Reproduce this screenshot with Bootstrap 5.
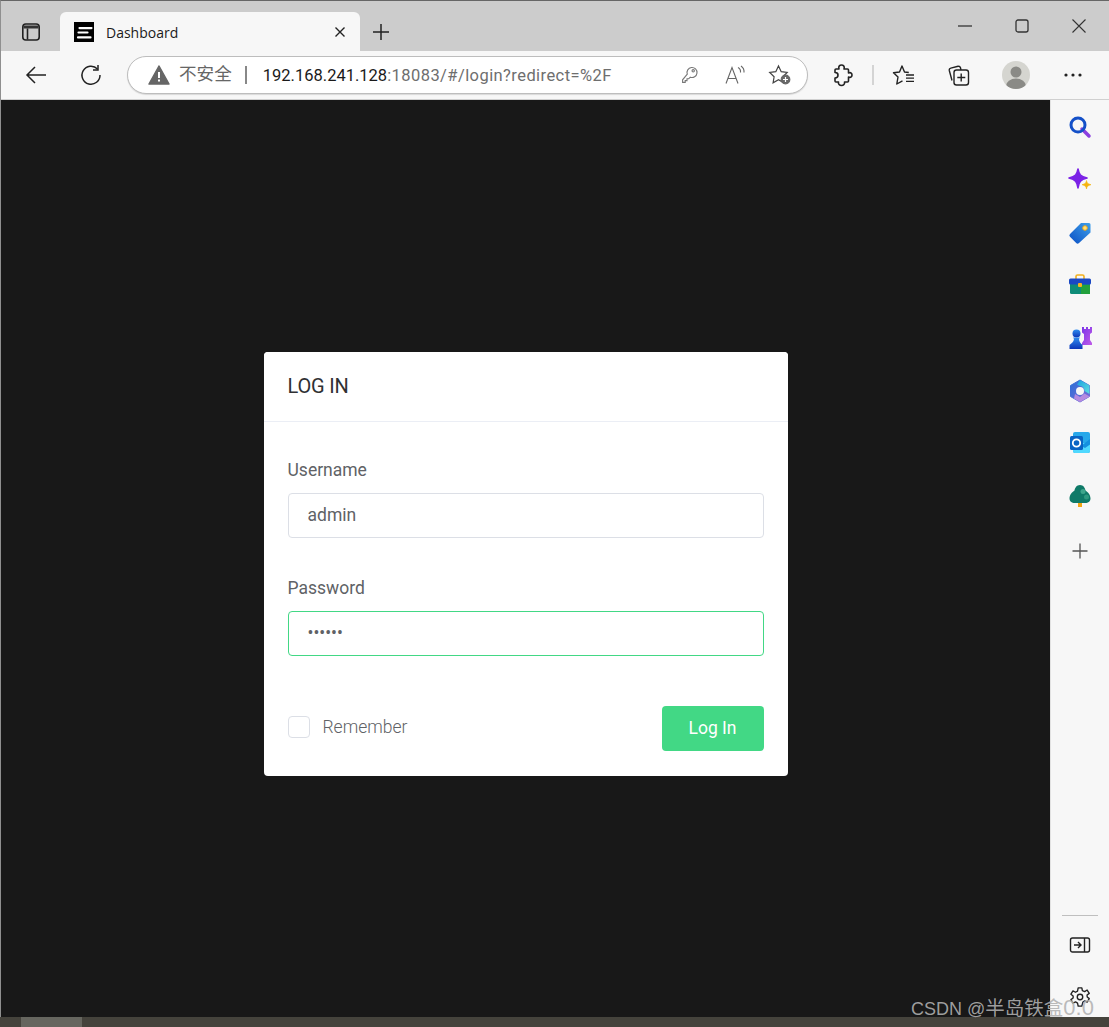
<!DOCTYPE html>
<html lang="en">
<head>
<meta charset="utf-8">
<title>Dashboard</title>
<link rel="stylesheet" href="https://cdn.jsdelivr.net/npm/bootstrap@5.3.0/dist/css/bootstrap.min.css">
<style>
html,body{height:100%;margin:0;overflow:hidden;background:#181818}
body{font-family:Roboto,"Noto Sans CJK SC",sans-serif}
.win{width:1109px;height:1027px;position:relative;background:#f7f7f7;border-left:1px solid #8f8f8f;border-top:1px solid #666}
.strip{height:50px;background:#ccc;padding-top:11px;padding-left:8px}
.tabs-btn{width:44px;height:40px}
.tab{width:300px;height:40px;margin-left:7px;background:#f7f7f7;border-radius:6px 6px 0 0;padding:0 14px 0 14px;font:14px "Open Sans",Roboto,sans-serif;color:#1b1b1b}
.favi{width:20px;height:20px;background:#000;margin-right:12px;flex:none}
.newtab{width:44px;height:40px;margin-left:-1px}
.winctl{margin-left:auto;margin-top:-11px;height:50px;padding-right:2px}
.winctl span{width:57px;height:50px}
.tools{height:48px;background:#f7f7f7;padding-left:13px}
.tool{width:44px;height:40px;flex:none}
.m-refresh{margin-left:11px}
.m-fav{margin-left:8px}
.m-coll{margin-left:11px}
.m-user{margin-left:13px}
.addr{width:681px;height:38px;margin-left:14px;margin-right:12px;background:#fff;border:1px solid #bdbdbd;border-radius:19px;padding-left:20px;font:16.5px Roboto,"Noto Sans CJK SC",sans-serif;color:#6e6e6e;box-shadow:0 1px 1px rgba(0,0,0,.12);flex:none}
.insec{margin-left:9px;color:#666;font-size:17.6px;line-height:20px;padding-bottom:3px}
.vbar{width:2px;height:18px;background:#888;margin:0 16px 0 13px}
.host{color:#1a1a1a}
.rest{letter-spacing:.43px}
.addr-ico{margin-left:auto;padding-right:5px}
.addr-ico span{width:45px}
.sep{width:2px;height:20px;background:#d4d4d4;margin:0 0 0 8px}
.body-row{height:918px;border-top:1px solid #d0d0d0}
.stage{width:1049px;background:#181818;padding-top:11px}
.side{width:59px;background:#f7f7f7;border-left:1px solid #e2e2e2;padding-top:1px}
.side-ico{height:52.7px;width:58px;flex:none}
.side-ico.plus-i{height:57px}
.side-ico.dock-i{height:58px}
.side-ico.gear-i{height:43px;padding-top:3px}
.side-rule{width:36px;height:1px;background:#bfbfbf;margin:0 auto;flex:none}
.spacer{flex:1}
.login{width:524px;height:424px;border:0;border-radius:4px;background:#fff}
.login .card-header{height:70px;background:#fff;border-bottom:1px solid #ebeef5;padding:0 24px;font-size:20px;letter-spacing:-.2px;line-height:68px;color:#303133;border-radius:4px 4px 0 0}
.login .card-body{padding:36px 24px 25px}
.lbl{font-size:17.5px;line-height:24px;color:#606266;margin:0 0 11px;display:block}
.fld{height:45px;border:1px solid #dcdfe6;border-radius:4px;padding:0 19px 2px;font-size:17.500px;color:#606266;box-shadow:none}
.fld.on,.fld.on:focus{border-color:#42d885;box-shadow:none;color:#606266}
.gap-f{margin-bottom:38px}
.foot{margin-top:50px}
.rem-wrap{margin-bottom:3px}
.chk{width:22px;height:22px;margin:0;border:1px solid #dcdfe6;border-radius:4px;flex:none}
.rem{font-size:17.5px;font-weight:300;color:#606266;margin:0 0 0 13px}
.btn-in{width:102px;height:45px;padding:0;background:#42d885;border:0;border-radius:4px;color:#fff;font-size:17.5px}
.btn-in:hover{background:#42d885;color:#fff}
.bottom{height:10px;background:#45433c;margin-left:-1px}
.thumb{width:61px;height:10px;margin-left:21px;background:#66665f}
.mark-w{position:absolute;left:910px;top:996px;font:18px "Liberation Sans","Noto Sans CJK SC",sans-serif;color:rgba(178,178,178,.88);line-height:22px;white-space:nowrap}
.mark-c{font-size:19.5px}
.mark-n{font-size:22px}
</style>
</head>
<body>
<div class="win d-flex flex-column">
  <div class="strip d-flex align-items-start">
    <div class="tabs-btn d-flex align-items-center justify-content-center">
      <svg width="20" height="20" viewBox="0 0 20 20" fill="none" stroke="#222" stroke-width="1.6"><rect x="1.800" y="2" width="16.400" height="16" rx="3"/><path d="M2.500 3.500h15v3h-15z" fill="#333" stroke="none"/><path d="M6.500 6.500v11"/></svg>
    </div>
    <div class="tab d-flex align-items-center">
      <div class="favi d-flex align-items-center justify-content-center">
        <svg width="20" height="20" viewBox="0 0 20 20" fill="none" stroke="#fff" stroke-width="2.200" stroke-linecap="round"><path d="M5.500 6.100h12M4.500 10.500h9M4 15.400h12.500"/></svg>
      </div>
      <span>Dashboard</span>
      <svg class="ms-auto" width="12" height="12" viewBox="0 0 12 12" stroke="#222" stroke-width="1.400"><path d="M1.500 1.500l9 9M10.500 1.500l-9 9"/></svg>
    </div>
    <div class="newtab d-flex align-items-center justify-content-center">
      <svg width="18" height="18" viewBox="0 0 18 18" stroke="#222" stroke-width="1.500"><path d="M9 1v16M1 9h16"/></svg>
    </div>
    <div class="winctl d-flex">
      <span class="d-flex align-items-center justify-content-center"><svg width="14" height="14" viewBox="0 0 14 14" stroke="#333" stroke-width="1.300"><path d="M0 7h14"/></svg></span>
      <span class="d-flex align-items-center justify-content-center"><svg width="14" height="14" viewBox="0 0 14 14" fill="none" stroke="#333" stroke-width="1.300"><rect x="1" y="1" width="12" height="12" rx="2"/></svg></span>
      <span class="d-flex align-items-center justify-content-center"><svg width="14" height="14" viewBox="0 0 14 14" stroke="#333" stroke-width="1.100"><path d="M.5.500l13 13M13.500.500l-13 13"/></svg></span>
    </div>
  </div>

  <div class="tools d-flex align-items-center">
    <div class="tool d-flex align-items-center justify-content-center">
      <svg width="22" height="20" viewBox="0 0 22 20" fill="none" stroke="#222" stroke-width="1.500"><path d="M21 10H2M10 2l-8 8 8 8"/></svg>
    </div>
    <div class="tool m-refresh d-flex align-items-center justify-content-center">
      <svg width="22" height="22" viewBox="0 0 22 22" fill="none" stroke="#222" stroke-width="1.500"><path d="M17.500 5A9 9 0 1 0 20 11"/><path d="M18 1v5h-5"/></svg>
    </div>
    <div class="addr d-flex align-items-center">
      <svg width="22" height="20" viewBox="0 0 22 20"><path d="M11 1L1 19h20z" fill="#666" stroke="#666" stroke-width="1.500" stroke-linejoin="round"/><path d="M10 7h2v6h-2zM10 14.500h2v2h-2z" fill="#fff"/></svg>
      <span class="insec">不安全</span><span class="vbar"></span>
      <span><span class="host">192.168.241.128</span><span class="rest">:18083/#/login?redirect=%2F</span></span>
      <div class="addr-ico d-flex align-items-center">
        <span class="d-flex justify-content-center"><svg width="18" height="20" viewBox="0 0 18 20" fill="none" stroke="#777" stroke-width="1.100"><path d="M6.300 9.200a5 5 0 1 1 3 3l-1.600 1.600H6v1.800H4.200v1.800H1.600v-2.600z"/><circle cx="12.200" cy="5.800" r="1.200"/></svg></span>
        <span class="d-flex justify-content-center"><svg width="22" height="20" viewBox="0 0 22 20" fill="none" stroke="#666" stroke-width="1.100"><path d="M2 18.500L8 2.500l6 16M4 13.500h8"/><path d="M14 2.500a5 5 0 0 1 2.500 5M17 1a7 7 0 0 1 3 6.500"/></svg></span>
        <span class="d-flex justify-content-center"><svg width="24" height="22" viewBox="0 0 24 22" fill="none" stroke="#444" stroke-width="1.200"><path d="M10.500 2l2.700 5.700 6 .8-4.300 4.300.9 6-5.300-3-5.400 3 1-6-4.400-4.300 6.100-.8z"/><circle cx="17.500" cy="15.500" r="4.300" fill="#666" stroke="#666"/><path d="M17.500 13v5M15 15.500h5" stroke="#fff" stroke-width="1.200"/></svg></span>
      </div>
    </div>
    <div class="tool d-flex align-items-center justify-content-center">
      <svg width="22" height="24" viewBox="0 0 22 24" fill="none" stroke="#222" stroke-width="1.600" stroke-linejoin="round"><path d="M5 6H8C7 3 9 2 10.500 2C12 2 14 3 13 6H16.500a1 1 0 0 1 1 1V10C20 9 21 10.500 21 12C21 13.500 20 15 17.500 14V18a1 1 0 0 1-1 1H13.500C14 21 12.500 22.500 10.500 22.500C8.500 22.500 7 21 7.500 19H5a1 1 0 0 1-1-1V15C6 15 7 13.700 7 12C7 10.300 6 9.500 4 9.500V7a1 1 0 0 1 1-1z"/></svg>
    </div>
    <span class="sep"></span>
    <div class="tool m-fav d-flex align-items-center justify-content-center">
      <svg width="24" height="22" viewBox="0 0 24 22" fill="none" stroke="#222" stroke-width="1.400" stroke-linejoin="round"><path d="M16.800 8.500L12.500 8 10 2 7.500 8 1.500 8.800 6 13l-1.200 7 5.700-3.200"/><path d="M14 11h8M14 14.200h8M14 17.400h8" stroke-width="1.300"/></svg>
    </div>
    <div class="tool m-coll d-flex align-items-center justify-content-center">
      <svg width="24" height="24" viewBox="0 0 24 24" fill="none" stroke="#222" stroke-width="1.400"><path d="M5 17.500L2.300 7.500a2 2 0 0 1 1.500-2.400L11 3.300a2 2 0 0 1 2.400 1.200L14 7"/><rect x="7" y="7" width="14.500" height="15" rx="2.500"/><path d="M14.200 10.500v8M10.300 14.500h8"/></svg>
    </div>
    <div class="tool m-user d-flex align-items-center justify-content-center">
      <svg width="30" height="30" viewBox="0 0 30 30"><defs><clipPath id="av"><circle cx="15" cy="15" r="14"/></clipPath></defs><circle cx="15" cy="15" r="14" fill="#d5d5d0"/><g clip-path="url(#av)" fill="#8a8a86"><circle cx="15" cy="12" r="5.500"/><ellipse cx="15" cy="26" rx="10" ry="7.500"/></g></svg>
    </div>
    <div class="tool m-user d-flex align-items-center justify-content-center">
      <svg width="18" height="4" viewBox="0 0 18 4" fill="#222"><circle cx="2" cy="2" r="1.600"/><circle cx="9" cy="2" r="1.600"/><circle cx="16" cy="2" r="1.600"/></svg>
    </div>
  </div>

  <div class="body-row d-flex">
    <main class="stage d-flex align-items-center justify-content-center">
      <div class="card login">
        <div class="card-header">LOG IN</div>
        <div class="card-body">
          <form>
            <div class="gap-f">
              <label class="lbl" for="u">Username</label>
              <input id="u" class="form-control fld" type="text" value="admin">
            </div>
            <div>
              <label class="lbl" for="p">Password</label>
              <input id="p" class="form-control fld on" type="password" value="123456">
            </div>
            <div class="foot d-flex justify-content-between align-items-center">
              <div class="rem-wrap d-flex align-items-center">
                <input id="r" class="form-check-input chk" type="checkbox">
                <label class="rem" for="r">Remember</label>
              </div>
              <button type="button" class="btn btn-in">Log In</button>
            </div>
          </form>
        </div>
      </div>
    </main>
    <aside class="side d-flex flex-column">
      <div class="side-ico d-flex align-items-center justify-content-center">
        <svg width="24" height="24" viewBox="0 0 24 24" fill="none"><path d="M14 14l7 7" stroke="#8b3fe0" stroke-width="3.500" stroke-linecap="round"/><circle cx="10" cy="10" r="7" stroke="#1450c8" stroke-width="3"/></svg>
      </div>
      <div class="side-ico d-flex align-items-center justify-content-center">
        <svg width="24" height="24" viewBox="0 0 24 24"><path d="M10 1c.9 5.500 2.500 7.500 9 9-6.500 1.500-8.100 3.500-9 10-.9-6.500-2.500-8.500-9-10 6.500-1.500 8.100-3.500 9-9z" fill="#7b22e6" stroke="#7b22e6" stroke-width="1.600" stroke-linejoin="round"/><path d="M18.500 12.500c.4 2.500 1.200 3.300 4.500 4.200-3.300.9-4.100 1.700-4.500 4.300-.4-2.600-1.200-3.400-4.500-4.300 3.300-.9 4.100-1.700 4.500-4.200z" fill="#f5b40f" stroke="#f5b40f" stroke-width=".6"/></svg>
      </div>
      <div class="side-ico d-flex align-items-center justify-content-center">
        <svg width="24" height="24" viewBox="0 0 24 24"><defs><linearGradient id="tg" x1="0" y1="1" x2="1" y2="0"><stop offset="0" stop-color="#0a4fc4"/><stop offset="1" stop-color="#3fa0ea"/></linearGradient></defs><path d="M13 2h8a1.500 1.500 0 0 1 1.500 1.500v8L11 22a2 2 0 0 1-2.800 0L2 15.800a2 2 0 0 1 0-2.800z" fill="url(#tg)"/><circle cx="17" cy="7" r="2.300" fill="#ffe27a" stroke="#f0a818"/></svg>
      </div>
      <div class="side-ico d-flex align-items-center justify-content-center">
        <svg width="24" height="24" viewBox="0 0 24 24"><path d="M8 6V3.500A1.500 1.500 0 0 1 9.500 2h5A1.500 1.500 0 0 1 16 3.500V6" fill="none" stroke="#f2b01e" stroke-width="1.600"/><rect x="2" y="9" width="20" height="12" rx="1.500" fill="#0e8c78"/><rect x="13" y="12" width="9" height="9" fill="#22a03c"/><rect x="1" y="5.500" width="22" height="6" rx="1.500" fill="#1a48c4"/><rect x="10" y="10" width="4" height="4" rx="1" fill="#f7b51c"/></svg>
      </div>
      <div class="side-ico d-flex align-items-center justify-content-center">
        <svg width="24" height="24" viewBox="0 0 24 24"><defs><linearGradient id="pw" x1="0" y1="0" x2="0" y2="1"><stop offset="0" stop-color="#2f8cf0"/><stop offset="1" stop-color="#0c35b8"/></linearGradient><linearGradient id="rk" x1="0" y1="0" x2="1" y2="1"><stop offset="0" stop-color="#7a35e8"/><stop offset="1" stop-color="#c05ce8"/></linearGradient></defs><path d="M14 1h2v2h2V1h2v2h2V1h2v5.500l-2 1.500v6l2 3v2H14v-2l2-3V8l-2-1.500z" fill="url(#rk)"/><circle cx="8.500" cy="7.500" r="4" fill="url(#pw)"/><path d="M5 11.500h7l-1 1.500c.3 3 1.500 4.500 3.500 6V23H1.500v-4C3.500 17.500 5.700 16 6 13z" fill="url(#pw)"/></svg>
      </div>
      <div class="side-ico d-flex align-items-center justify-content-center">
        <svg width="24" height="24" viewBox="0 0 24 24"><defs><linearGradient id="m1" x1="0" y1="0" x2="1" y2="1"><stop offset="0" stop-color="#2a6fd6"/><stop offset="1" stop-color="#7d6bd8"/></linearGradient><linearGradient id="m2" x1="0" y1="0" x2="1" y2="1"><stop offset="0" stop-color="#1a9fe0"/><stop offset="1" stop-color="#5fe0e0"/></linearGradient></defs><path d="M12 1l9.500 5.500v11L12 23l-9.500-5.500v-11z" fill="url(#m1)" stroke="url(#m1)" stroke-width="1" stroke-linejoin="round"/><path d="M12 1l9.500 5.500V15l-5-3c0-3-2-5-4.500-5l-3-1.500z" fill="url(#m2)"/><path d="M7 15l5 3 4.500-3.500 5 3L12 23l-6-3.500z" fill="#b58be0"/><circle cx="12" cy="12" r="4" fill="#f7f7f7"/></svg>
      </div>
      <div class="side-ico d-flex align-items-center justify-content-center">
        <svg width="24" height="24" viewBox="0 0 24 24"><rect x="5" y="1" width="17" height="21" rx="2" fill="#28a8ea"/><path d="M5 12h17v8a2 2 0 0 1-2 2H7a2 2 0 0 1-2-2z" fill="#50d9ff"/><path d="M13 15l9-7v5.500L17 17z" fill="#1490df"/><rect x="2" y="5" width="13" height="14" rx="1.500" fill="#0a64c4"/><circle cx="8.500" cy="12" r="3.700" fill="none" stroke="#fff" stroke-width="1.800"/></svg>
      </div>
      <div class="side-ico d-flex align-items-center justify-content-center">
        <svg width="24" height="24" viewBox="0 0 24 24"><rect x="10" y="18" width="4" height="5" fill="#f2a615"/><path d="M12 1c3.500 0 5 3 5.500 5.500C20 8 22.500 11 22.500 14.500c0 3-2.500 4.500-5 4.500H6.500c-2.500 0-5-1.500-5-4.500 0-3.500 2.500-6.500 5-8C7 4 8.500 1 12 1z" fill="#0f7a68"/><circle cx="15" cy="7.500" r="2.500" fill="#3ea68c"/><circle cx="18.500" cy="13" r="2.500" fill="#2f9a80"/></svg>
      </div>
      <div class="side-ico plus-i d-flex align-items-center justify-content-center">
        <svg width="16" height="16" viewBox="0 0 16 16" stroke="#555" stroke-width="1.300"><path d="M8 .5v15M.5 8h15"/></svg>
      </div>
      <div class="spacer"></div>
      <div class="side-rule"></div>
      <div class="side-ico dock-i d-flex align-items-center justify-content-center">
        <svg width="22" height="18" viewBox="0 0 22 18" fill="none" stroke="#222" stroke-width="1.400"><rect x="1.500" y="2" width="19" height="14" rx="2"/><path d="M15.500 2v14"/><path d="M5 9h7M9 6l3 3-3 3"/></svg>
      </div>
      <div class="side-ico gear-i d-flex align-items-center justify-content-center">
        <svg width="22" height="22" viewBox="0 0 24 24" fill="none" stroke="#222" stroke-width="1.500" stroke-linejoin="round"><circle cx="12" cy="12" r="3"/><path d="M10 2h4l.6 3 2.500 1.100 2.700-1.700 2.300 3.600-2.400 1.800.2 2.200 2.200 1.800-2.300 3.700-2.600-1.300-2 1.300L14 22h-4l-.7-3.400-2.100-1.200-2.900 1.300-2.200-3.800 2.400-1.900V10.900L2.100 8.900l2.200-3.600 2.800 1.500 2.200-1.300z"/></svg>
      </div>
    </aside>
  </div>
  <div class="bottom"><div class="thumb"></div></div>
  <div class="mark-w">CSDN @<span class="mark-c">半岛铁盒</span><span class="mark-n">0.0</span></div>
</div>
<script src="https://cdn.jsdelivr.net/npm/bootstrap@5.3.0/dist/js/bootstrap.bundle.min.js"></script>
</body>
</html>
